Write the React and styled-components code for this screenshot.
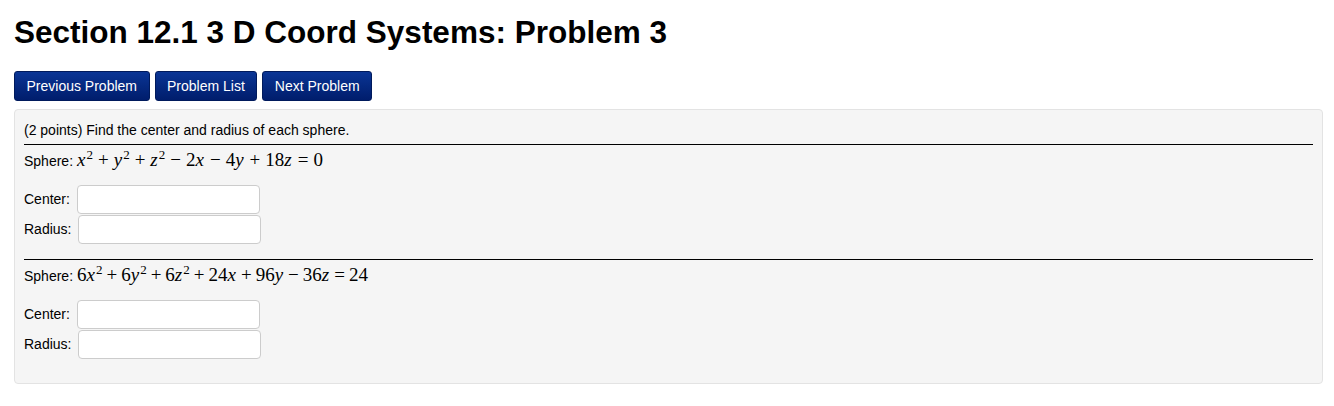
import React from "react";
import styled, { createGlobalStyle } from "styled-components";

const GlobalStyle = createGlobalStyle`
  body {
    margin: 0;
    background: #ffffff;
    font-family: "Liberation Sans", Arial, sans-serif;
    color: #000;
  }
`;

const Page = styled.div`
  padding: 0 11px 0 14px;
`;

const Title = styled.h1`
  margin: 0;
  padding-top: 14px;
  font-size: 31.5px;
  line-height: 36px;
  font-weight: bold;
`;

const Nav = styled.div`
  display: flex;
  gap: 5px;
  margin-top: 21px;
`;

const NavButton = styled.button`
  height: 30px;
  padding: 0 11.5px;
  border: 1px solid #001a5c;
  border-radius: 3px;
  background: linear-gradient(#0a3595, #001d6c);
  color: #fff;
  font-family: "Liberation Sans", Arial, sans-serif;
  font-size: 14px;
  cursor: pointer;
`;

const Panel = styled.div`
  margin-top: 8px;
  background: #f5f5f5;
  border: 1px solid #e3e3e3;
  border-radius: 4px;
  padding: 12px 9px 9px;
  font-size: 14px;
`;

const Intro = styled.div`
  line-height: 16px;
  padding-bottom: 6px;
`;

const Rule = styled.hr`
  margin: 0;
  border: none;
  border-top: 1px solid #000;
`;

const SphereLine = styled.div`
  display: flex;
  align-items: baseline;
  gap: 4px;
  height: 24px;
  padding-top: 4px;
`;

const Math = styled.span`
  font-family: "Liberation Serif", "Times New Roman", serif;
  font-size: 19px;
  white-space: pre;
`;

const Op = styled.span`
  margin: 0 ${({ tight }) => (tight ? 4 : 5)}px;
`;

const V = styled.i`
  font-style: italic;
  padding-right: 1px;
`;

const Sup = styled.sup`
  font-size: 13px;
  line-height: 0;
`;

const Fields = styled.div`
  display: flex;
  flex-direction: column;
  margin-top: 11px;
  padding-bottom: 15px;
`;

const FieldRow = styled.label`
  display: flex;
  align-items: center;
  gap: 7px;
  height: 30px;
`;

const Input = styled.input`
  width: 183px;
  height: 29px;
  box-sizing: border-box;
  border: 1px solid #cccccc;
  border-radius: 4px;
  background: #fff;
`;

const Term = ({ c, v, p }) => (
  <>
    {c}
    {v && <V>{v}</V>}
    {p && <Sup>{p}</Sup>}
  </>
);

const Sphere = ({ terms, tight }) => (
  <SphereLine>
    <span>Sphere:</span>
    <Math>
      {terms.map((t, i) => (
        <React.Fragment key={i}>
          {t.op && <Op tight={tight}>{t.op}</Op>}
          <Term {...t} />
        </React.Fragment>
      ))}
    </Math>
  </SphereLine>
);

const Answers = () => (
  <Fields>
    <FieldRow>
      Center:
      <Input />
    </FieldRow>
    <FieldRow>
      Radius:
      <Input />
    </FieldRow>
  </Fields>
);

const sphere1 = [
  { v: "x", p: "2" },
  { op: "+", v: "y", p: "2" },
  { op: "+", v: "z", p: "2" },
  { op: "−", c: "2", v: "x" },
  { op: "−", c: "4", v: "y" },
  { op: "+", c: "18", v: "z" },
  { op: "=", c: "0" },
];

const sphere2 = [
  { c: "6", v: "x", p: "2" },
  { op: "+", c: "6", v: "y", p: "2" },
  { op: "+", c: "6", v: "z", p: "2" },
  { op: "+", c: "24", v: "x" },
  { op: "+", c: "96", v: "y" },
  { op: "−", c: "36", v: "z" },
  { op: "=", c: "24" },
];

export default function App() {
  return (
    <>
      <GlobalStyle />
      <Page>
        <Title>Section 12.1 3 D Coord Systems: Problem 3</Title>
        <Nav>
          <NavButton>Previous Problem</NavButton>
          <NavButton>Problem List</NavButton>
          <NavButton>Next Problem</NavButton>
        </Nav>
        <Panel>
          <Intro>(2 points) Find the center and radius of each sphere.</Intro>
          <Rule />
          <Sphere terms={sphere1} />
          <Answers />
          <Rule />
          <Sphere terms={sphere2} tight />
          <Answers />
        </Panel>
      </Page>
    </>
  );
}
